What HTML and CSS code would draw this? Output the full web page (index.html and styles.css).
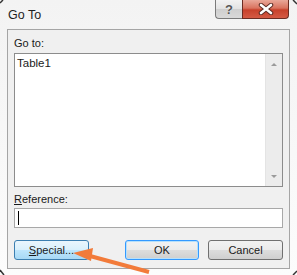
FILE: index.html
```html
<!DOCTYPE html>
<html lang="en">
<head>
    <meta charset="UTF-8">
    <title>Go To</title>
    <link rel="stylesheet" href="styles.css">
</head>
<body>
    <div id="dialog">
        <div id="titlebar">
            <div class="title">Go To</div>
            <div class="caption-buttons">
                <div class="cap-btn help">?</div>
                <div class="cap-btn close">
                    <svg width="18" height="12" viewBox="0 0 18 12">
                        <path d="M4 2 L14 10 M14 2 L4 10" stroke="#5a2a22" stroke-width="4.5" stroke-linecap="round"/>
                        <path d="M4 2 L14 10 M14 2 L4 10" stroke="#ffffff" stroke-width="2.6" stroke-linecap="round"/>
                    </svg>
                </div>
            </div>
        </div>

        <div id="client">
            <div class="label">Go to:</div>
            <div class="listbox">
                <div class="list-items">
                    <div class="list-item">Table1</div>
                </div>
                <div class="scrollbar">
                    <div class="arrow-up"></div>
                    <div class="arrow-down"></div>
                </div>
            </div>

            <div class="label ref-label"><u>R</u>eference:</div>
            <div class="textbox"><span class="caret"></span></div>

            <div class="button-row">
                <div class="btn special"><u>S</u>pecial...</div>
                <div class="btn ok">OK</div>
                <div class="btn cancel">Cancel</div>
            </div>
        </div>

        <svg class="pointer" width="297" height="275" viewBox="0 0 297 275">
            <!-- window corner marks -->
            <path d="M0 3 L3 0" stroke="#333" stroke-width="1.5"/>
            <path d="M293 0 L297 4" stroke="#333" stroke-width="1.5"/>
            <path d="M0 270 L4 275" stroke="#333" stroke-width="1.5"/>
            <path d="M293 275 L297 271" stroke="#333" stroke-width="1.5"/>
            <!-- orange arrow -->
            <line x1="149" y1="272" x2="90" y2="256" stroke="#f27b3a" stroke-width="4"/>
            <polygon points="73,253 93,248 91,261" fill="#f27b3a"/>
        </svg>
    </div>
</body>
</html>
```

FILE: styles.css
```css
body {
    margin: 0;
    background: #fbfbfb;
    font-family: "Liberation Sans", Arial, sans-serif;
    font-size: 11px;
    color: #1a1a1a;
}

#dialog {
    position: relative;
    width: 297px;
    height: 275px;
    background: linear-gradient(#f3f3f3, #fcfcfc);
    overflow: hidden;
}

#titlebar {
    display: flex;
    height: 29px;
}

.title {
    padding: 8px 0 0 8px;
    font-size: 12.5px;
    color: #1e1e1e;
}

.caption-buttons {
    display: flex;
    margin-left: auto;
    margin-right: 8px;
    height: 19px;
}

.cap-btn {
    display: flex;
    align-items: center;
    justify-content: center;
    height: 19px;
    box-sizing: border-box;
    border: 1px solid #7a7a7a;
    border-top: none;
}

.help {
    width: 27px;
    border-radius: 0 0 0 4px;
    border-right: none;
    background: linear-gradient(#f2f2f2 0%, #e2e2e2 50%, #cfcfcf 51%, #d9d9d9 100%);
    color: #555;
    font-size: 13px;
    font-weight: bold;
    text-shadow: 0 0 1px #fff;
}

.close {
    width: 47px;
    border-radius: 0 0 4px 0;
    border-color: #6b2c22;
    background: linear-gradient(#e9a899 0%, #d9735f 45%, #c7412b 55%, #d45a44 100%);
}

#client {
    margin: 0 7px;
    padding: 6px 6px 8px 6px;
    border: 1px solid #a5a5a5;
    background: #f0f0f0;
}

.label {
    height: 14px;
    line-height: 14px;
    margin-bottom: 3px;
}

.listbox {
    display: flex;
    height: 132px;
    border: 1px solid #8c8c8c;
    background: #fff;
}

.list-items {
    flex-grow: 1;
    padding: 2px 2px;
}

.list-item {
    font-size: 11.5px;
    line-height: 14px;
}

.scrollbar {
    width: 16px;
    background: #ececec;
    border-left: 1px solid #e4e4e4;
    display: flex;
    flex-direction: column;
    justify-content: space-between;
    align-items: center;
    padding: 9px 0 8px 0;
}

.arrow-up {
    border-left: 3px solid transparent;
    border-right: 3px solid transparent;
    border-bottom: 3px solid #9a9a9a;
}

.arrow-down {
    border-left: 3px solid transparent;
    border-right: 3px solid transparent;
    border-top: 3px solid #9a9a9a;
}

.ref-label {
    margin-top: 5px;
    margin-bottom: 2px;
}

.textbox {
    height: 20px;
    box-sizing: border-box;
    border: 1px solid #a8a8a8;
    background: #fff;
    padding: 2px 0 0 3px;
}

.caret {
    display: block;
    width: 1px;
    height: 14px;
    background: #000;
}

.button-row {
    display: flex;
    margin-top: 12px;
}

.btn {
    width: 75px;
    height: 20px;
    box-sizing: border-box;
    border: 1px solid #707070;
    border-radius: 3px;
    text-align: center;
    line-height: 18px;
    background: linear-gradient(#f2f2f2 0%, #ebebeb 50%, #dddddd 51%, #cfcfcf 100%);
}

.special {
    border-color: #3c7fb1;
    background: linear-gradient(#eaf6fd 0%, #d9f0fc 50%, #bee6fd 51%, #a7d9f5 100%);
}

.ok {
    margin-left: auto;
    margin-right: 9px;
    width: 74px;
    border-color: #3399ff;
    box-shadow: inset 0 0 0 1px #b6e0fb;
}

.pointer {
    position: absolute;
    left: 0;
    top: 0;
    pointer-events: none;
}
```
